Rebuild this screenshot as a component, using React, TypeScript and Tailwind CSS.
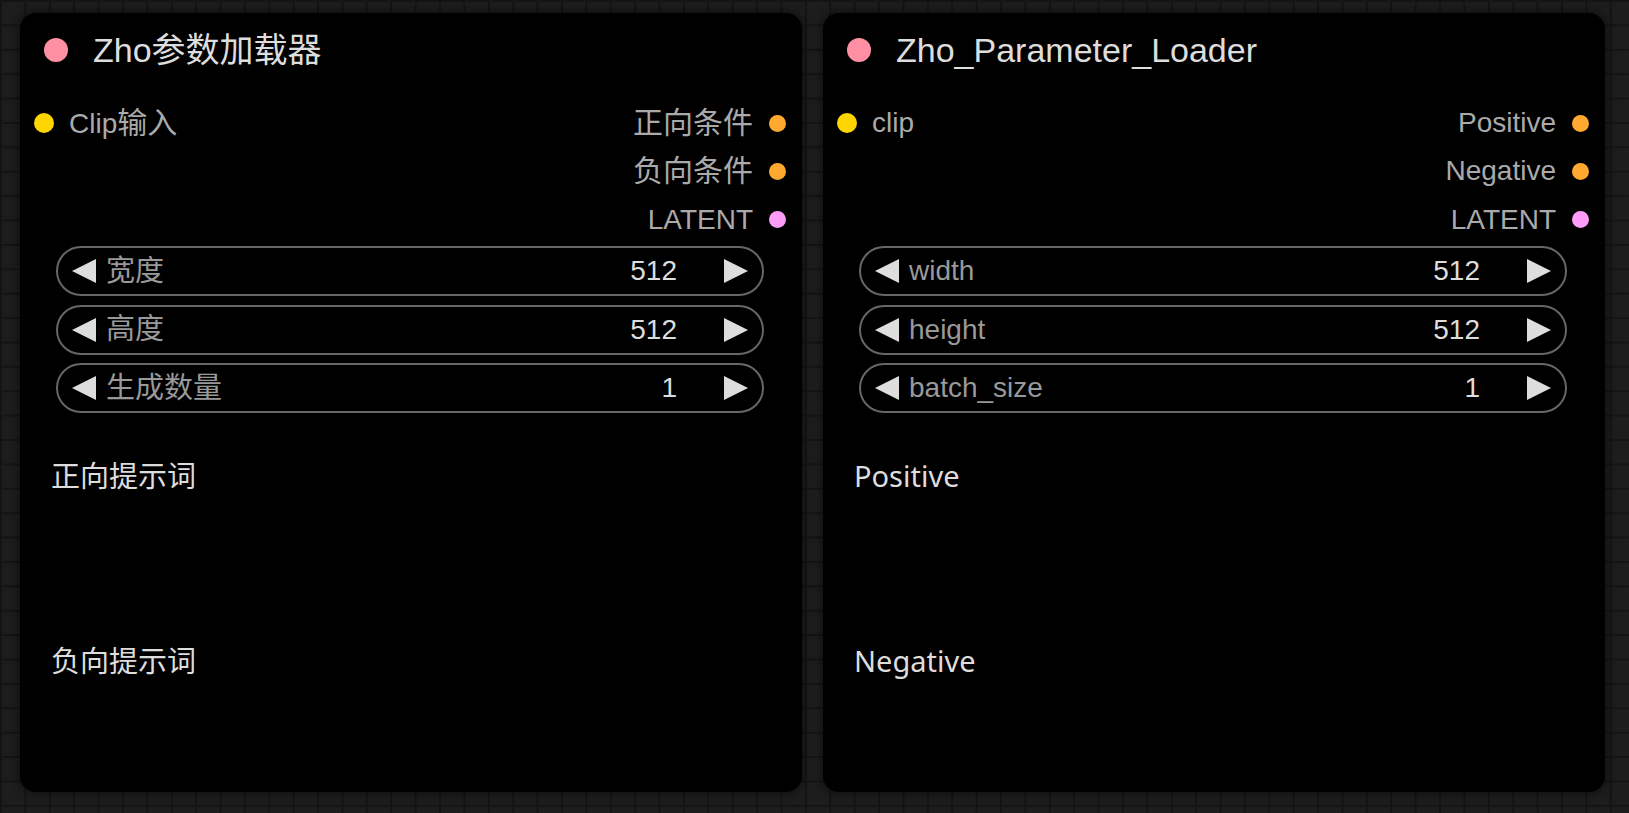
import React from "react";

const latin = "font-['Liberation_Sans','Noto_Sans_CJK_SC',sans-serif]";
const uiFont = "font-['Noto_Sans','Noto_Sans_CJK_SC',sans-serif]";

interface Output {
  label: string;
  color: string;
}

interface Widget {
  label: string;
  value: string;
}

interface NodeProps {
  title: string;
  input: string;
  outputs: Output[];
  widgets: Widget[];
  prompts: [string, string];
}

// CJK glyphs in the screenshot come from a wider face, so bump them a little
function Label({ text, cjk }: { text: string; cjk: string }) {
  const parts = text.split(/([\u4e00-\u9fff]+)/).filter(Boolean);
  return (
    <>
      {parts.map((p, i) =>
        /[\u4e00-\u9fff]/.test(p) ? (
          <span key={i} className={cjk}>
            {p}
          </span>
        ) : (
          <span key={i}>{p}</span>
        )
      )}
    </>
  );
}

function Arrow({ dir }: { dir: "left" | "right" }) {
  return (
    <svg width="24" height="24" viewBox="0 0 24 24" className="shrink-0">
      {dir === "left" ? (
        <polygon points="24,0 24,24 0,12" fill="#dddddd" />
      ) : (
        <polygon points="0,0 0,24 24,12" fill="#dddddd" />
      )}
    </svg>
  );
}

function NumberWidget({ label, value }: Widget) {
  return (
    <div className="flex h-[50px] items-center rounded-full border-2 border-[#666666] pl-[14px] pr-[14px]">
      <Arrow dir="left" />
      <span className="ml-[10px] flex-1 text-[28px] leading-none text-[#999999]">
        <Label text={label} cjk="text-[29px]" />
      </span>
      <span className="text-[28px] leading-none text-[#dddddd]">{value}</span>
      <span className="ml-[47px]">
        <Arrow dir="right" />
      </span>
    </div>
  );
}

function Node({ title, input, outputs, widgets, prompts }: NodeProps) {
  return (
    <div
      className={`flex h-[779px] w-[782px] flex-col rounded-[16px] bg-black shadow-[0_0_8px_2px_rgba(0,0,0,0.45)] ${latin}`}
    >
      {/* title */}
      <div className="flex h-[74px] items-center pl-[24px]">
        <span className="h-[24px] w-[24px] rounded-full bg-[#ff8fa3]" />
        <span className="ml-[25px] text-[34px] leading-none text-[#dddddd]">
          {title}
        </span>
      </div>

      {/* slots */}
      <div className="mt-[12px] flex justify-between">
        <div className="flex h-[48px] items-center pl-[14px]">
          <span className="h-[20px] w-[20px] rounded-full bg-[#ffd500]" />
          <span className="ml-[15px] text-[28px] leading-none text-[#aaaaaa]">
            <Label text={input} cjk="text-[30px]" />
          </span>
        </div>
        <div className="flex flex-col items-end pr-[16px]">
          {outputs.map((o, i) => (
            <div
              key={o.label}
              className={`flex items-center ${i === 2 ? "h-[49px]" : "h-[48px]"}`}
            >
              <span className="text-[28px] leading-none text-[#aaaaaa]">
                <Label text={o.label} cjk="text-[30px]" />
              </span>
              <span
                className="ml-[16px] h-[17px] w-[17px] rounded-full"
                style={{ backgroundColor: o.color }}
              />
            </div>
          ))}
        </div>
      </div>

      {/* widgets */}
      <div className="ml-[36px] mr-[38px] mt-[2px] flex flex-col gap-[8.5px]">
        {widgets.map((w) => (
          <NumberWidget key={w.label} {...w} />
        ))}
      </div>

      {/* prompt textareas */}
      <div className={`mt-[43px] flex flex-col px-[31px] ${uiFont}`}>
        <div className="h-[185px] text-[29px] leading-[40px] text-[#dddddd]">
          <Label text={prompts[0]} cjk="text-[29px]" />
        </div>
        <div className="h-[140px] text-[29px] leading-[40px] text-[#dddddd]">
          <Label text={prompts[1]} cjk="text-[29px]" />
        </div>
      </div>
    </div>
  );
}

export default function App() {
  return (
    <div className="flex h-[813px] w-full gap-[21px] overflow-hidden bg-[#1d1d1d] bg-[linear-gradient(to_right,#141414_2px,transparent_2px),linear-gradient(to_bottom,#141414_2px,transparent_2px)] bg-[size:24.4px_24.4px] pl-[20px] pt-[13px]">
      <Node
        title="Zho参数加载器"
        input="Clip输入"
        outputs={[
          { label: "正向条件", color: "#ffa931" },
          { label: "负向条件", color: "#ffa931" },
          { label: "LATENT", color: "#ff9cf9" },
        ]}
        widgets={[
          { label: "宽度", value: "512" },
          { label: "高度", value: "512" },
          { label: "生成数量", value: "1" },
        ]}
        prompts={["正向提示词", "负向提示词"]}
      />
      <Node
        title="Zho_Parameter_Loader"
        input="clip"
        outputs={[
          { label: "Positive", color: "#ffa931" },
          { label: "Negative", color: "#ffa931" },
          { label: "LATENT", color: "#ff9cf9" },
        ]}
        widgets={[
          { label: "width", value: "512" },
          { label: "height", value: "512" },
          { label: "batch_size", value: "1" },
        ]}
        prompts={["Positive", "Negative"]}
      />
    </div>
  );
}
